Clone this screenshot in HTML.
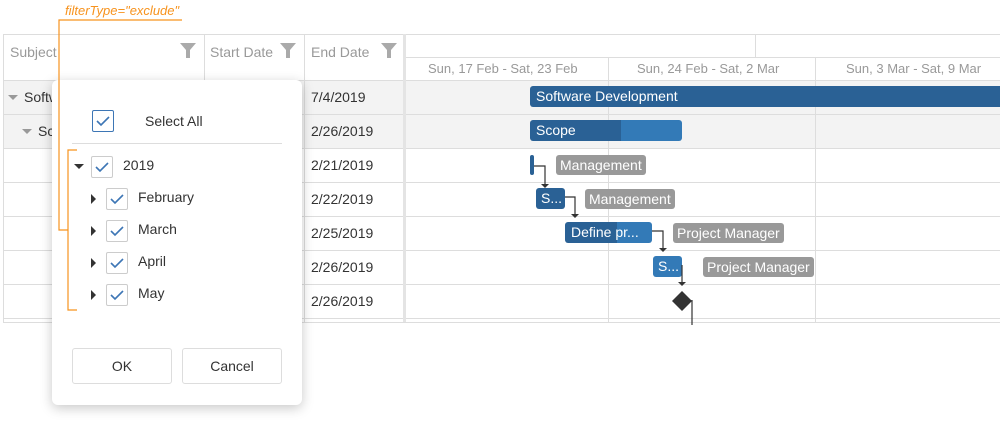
<!DOCTYPE html>
<html><head><style>
*{box-sizing:border-box;margin:0;padding:0}
body{width:1000px;height:424px;background:#fff;font-family:"Segoe UI","Liberation Sans",sans-serif;font-size:14px;color:#333;position:relative;overflow:hidden}
.a{position:absolute}
.hl{position:absolute;height:1px;background:#ddd}
.vl{position:absolute;width:1px;background:#ddd}
.hd{color:#999;font-size:14px}
.bar{position:absolute;color:#fff;font-size:14px;line-height:21px;padding-left:6px;border-radius:3px;white-space:nowrap;overflow:hidden}
.lbl{position:absolute;background:#999;color:#fff;font-size:14px;line-height:20px;padding:0 4px;border-radius:3px}
.cb{position:absolute;width:22px;height:22px;border:1px solid #ccc;border-radius:2px;background:#fff}
.cb svg{position:absolute;left:3px;top:4px}
.tri{position:absolute;width:0;height:0;border-top:5px solid transparent;border-bottom:5px solid transparent;border-left:5px solid #333}
.btn{position:absolute;width:100px;height:36px;border:1px solid #ddd;border-radius:3px;text-align:center;line-height:34px;font-size:14px}
</style></head><body>
<div class="a" style="left:65px;top:3px;color:#f7931e;font-style:italic;font-size:13px">filterType="exclude"</div>
<!-- grid -->
<div class="a" style="left:3px;top:80px;width:997px;height:68px;background:#f3f3f3"></div>
<div class="hl" style="left:3px;top:34px;width:997px"></div>
<div class="hl" style="left:404px;top:57px;width:596px"></div>
<div class="hl" style="left:3px;top:80px;width:997px"></div>
<div class="hl" style="left:3px;top:114px;width:997px"></div>
<div class="hl" style="left:3px;top:148px;width:997px"></div>
<div class="hl" style="left:3px;top:182px;width:997px"></div>
<div class="hl" style="left:3px;top:216px;width:997px"></div>
<div class="hl" style="left:3px;top:250px;width:997px"></div>
<div class="hl" style="left:3px;top:284px;width:997px"></div>
<div class="hl" style="left:3px;top:318px;width:997px"></div>
<div class="hl" style="left:3px;top:322px;width:997px"></div>
<div class="vl" style="left:3px;top:34px;height:288px"></div>
<div class="vl" style="left:204px;top:34px;height:46px"></div>
<div class="vl" style="left:304px;top:34px;height:288px"></div>
<div class="vl" style="left:403px;top:34px;height:288px;width:3px;background:#e4e4e4"></div>
<div class="vl" style="left:755px;top:34px;height:23px"></div>
<div class="vl" style="left:608px;top:57px;height:265px"></div>
<div class="vl" style="left:815px;top:57px;height:265px"></div>
<div class="a hd" style="left:10px;top:44px">Subject</div>
<div class="a hd" style="left:210px;top:44px">Start Date</div>
<div class="a hd" style="left:311px;top:44px">End Date</div>
<svg class="a" style="left:180px;top:43px" width="16" height="16"><path d="M0 0H16L10 7V15H6V7Z" fill="#aaa"/></svg>
<svg class="a" style="left:280px;top:43px" width="16" height="16"><path d="M0 0H16L10 7V15H6V7Z" fill="#aaa"/></svg>
<svg class="a" style="left:381px;top:43px" width="16" height="16"><path d="M0 0H16L10 7V15H6V7Z" fill="#aaa"/></svg>
<div class="a hd" style="left:428px;top:61px;font-size:13px">Sun, 17 Feb - Sat, 23 Feb</div>
<div class="a hd" style="left:637px;top:61px;font-size:13px">Sun, 24 Feb - Sat, 2 Mar</div>
<div class="a hd" style="left:846px;top:61px;font-size:13px">Sun, 3 Mar - Sat, 9 Mar</div>
<div class="a" style="left:8px;top:95px;border-left:5px solid transparent;border-right:5px solid transparent;border-top:5px solid #999"></div>
<div class="a" style="left:24px;top:89px">Softw</div>
<div class="a" style="left:22px;top:129px;border-left:5px solid transparent;border-right:5px solid transparent;border-top:5px solid #999"></div>
<div class="a" style="left:38px;top:123px">Sc</div>
<div class="a" style="left:311px;top:89px">7/4/2019</div>
<div class="a" style="left:311px;top:123px">2/26/2019</div>
<div class="a" style="left:311px;top:157px">2/21/2019</div>
<div class="a" style="left:311px;top:191px">2/22/2019</div>
<div class="a" style="left:311px;top:225px">2/25/2019</div>
<div class="a" style="left:311px;top:259px">2/26/2019</div>
<div class="a" style="left:311px;top:293px">2/26/2019</div>
<!-- bars -->
<div class="bar" style="left:530px;top:86px;width:480px;background:#2a6195">Software Development</div>
<div class="bar" style="left:530px;top:120px;width:152px;background:linear-gradient(90deg,#2a6195 91px,#337ab7 91px)">Scope</div>
<div class="a" style="left:530px;top:155px;width:4px;height:20px;background:#2a6195;border-radius:2px"></div>
<div class="lbl" style="left:556px;top:155px">Management</div>
<div class="bar" style="left:536px;top:188px;width:29px;background:#2a6195;padding-left:5px">S...</div>
<div class="lbl" style="left:585px;top:189px">Management</div>
<div class="bar" style="left:565px;top:222px;width:87px;background:linear-gradient(90deg,#2a6195 52px,#337ab7 52px)">Define pr...</div>
<div class="lbl" style="left:673px;top:223px">Project Manager</div>
<div class="bar" style="left:653px;top:256px;width:29px;background:#337ab7;padding-left:5px">S...</div>
<div class="lbl" style="left:703px;top:257px">Project Manager</div>
<svg class="a" style="left:520px;top:150px" width="200" height="180">
<g stroke="#333" fill="none" stroke-width="1.2">
<path d="M14 16H25V34"/><path d="M45 47H55V64"/><path d="M132 81H143V98"/><path d="M162 115V132"/><path d="M172 150V175"/></g>
<g fill="#333"><path d="M21 34H29L25 38Z"/><path d="M51 64H59L55 68Z"/><path d="M139 98H147L143 102Z"/><path d="M158 132H166L162 136Z"/>
<path d="M162 141L172 151L162 161L152 151Z"/></g></svg>
<!-- popup -->
<div class="a" style="left:52px;top:80px;width:250px;height:325px;background:#fff;border-radius:6px;box-shadow:0 3px 12px rgba(0,0,0,.22)"></div>
<div class="cb" style="left:92px;top:110px;border-color:#3d76b5"><svg width="14" height="12"><path d="M1 6L5 10L13 2" stroke="#3d76b5" stroke-width="1.6" fill="none"/></svg></div>
<div class="a" style="left:145px;top:113px">Select All</div>
<div class="hl" style="left:72px;top:143px;width:210px"></div>
<div class="a" style="left:74px;top:164px;border-left:5px solid transparent;border-right:5px solid transparent;border-top:5px solid #333"></div>
<div class="cb" style="left:91px;top:156px"><svg width="14" height="12"><path d="M1 6L5 10L13 2" stroke="#3d76b5" stroke-width="1.6" fill="none"/></svg></div>
<div class="a" style="left:123px;top:157px">2019</div>
<div class="tri" style="left:91px;top:194px"></div><div class="cb" style="left:106px;top:188px"><svg width="14" height="12"><path d="M1 6L5 10L13 2" stroke="#3d76b5" stroke-width="1.6" fill="none"/></svg></div><div class="a" style="left:138px;top:189px">February</div>
<div class="tri" style="left:91px;top:226px"></div><div class="cb" style="left:106px;top:220px"><svg width="14" height="12"><path d="M1 6L5 10L13 2" stroke="#3d76b5" stroke-width="1.6" fill="none"/></svg></div><div class="a" style="left:138px;top:221px">March</div>
<div class="tri" style="left:91px;top:258px"></div><div class="cb" style="left:106px;top:252px"><svg width="14" height="12"><path d="M1 6L5 10L13 2" stroke="#3d76b5" stroke-width="1.6" fill="none"/></svg></div><div class="a" style="left:138px;top:253px">April</div>
<div class="tri" style="left:91px;top:290px"></div><div class="cb" style="left:106px;top:284px"><svg width="14" height="12"><path d="M1 6L5 10L13 2" stroke="#3d76b5" stroke-width="1.6" fill="none"/></svg></div><div class="a" style="left:138px;top:285px">May</div>
<div class="btn" style="left:72px;top:348px">OK</div>
<div class="btn" style="left:182px;top:348px">Cancel</div>
<!-- orange annotations -->
<svg class="a" style="left:0;top:0" width="200" height="320"><g stroke="#f7931e" stroke-width="1.2" fill="none">
<path d="M182 20H59V230H68"/><path d="M77 150H68V310H77"/></g></svg>
</body></html>
